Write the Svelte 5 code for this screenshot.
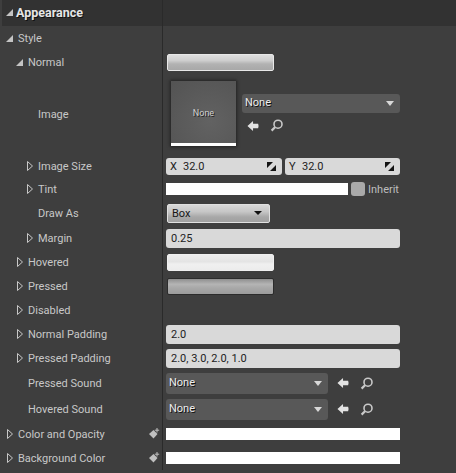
<script>
    const paddings = [
        { label: "Normal Padding", value: "2.0" },
        { label: "Pressed Padding", value: "2.0, 3.0, 2.0, 1.0" },
    ];
    const sounds = ["Pressed Sound", "Hovered Sound"];
    const colors = ["Color and Opacity", "Background Color"];
</script>

{#snippet open()}
    <svg class="tri" width="10" height="10" viewBox="0 0 10 10"><path d="M1 9 L8 2 V9 Z" fill="#c4c4c4" /></svg>
{/snippet}

{#snippet closed()}
    <svg class="tri" width="10" height="12" viewBox="0 0 10 12"><path d="M2.5 1.5 L7.5 6 L2.5 10.5 Z" fill="none" stroke="#c8c8c8" stroke-width="1" /></svg>
{/snippet}

{#snippet back()}
    <svg width="13" height="12" viewBox="0 0 14 12"><path d="M0.5 6 L6.5 0.5 V3.5 H12 Q13 6 12 8.5 H6.5 V11.5 Z" fill="#e2e2e2" /></svg>
{/snippet}

{#snippet search()}
    <svg width="14" height="13" viewBox="0 0 14 13"><circle cx="8" cy="5.2" r="4" fill="none" stroke="#c9c9c9" stroke-width="1.6" /><path d="M5 8.2 L1.6 11.6" stroke="#c9c9c9" stroke-width="2.2" /></svg>
{/snippet}

{#snippet expand()}
    <svg class="expand" width="9" height="9" viewBox="0 0 9 9"><path d="M0 0 H6 L0 6 Z M9 9 H3 L9 3 Z" fill="#141414" /></svg>
{/snippet}

{#snippet reset()}
    <svg class="keyicon" width="11" height="11" viewBox="0 0 11 11"><path d="M0 6 L4.5 2 L8.5 6 L4.5 10.5 Z" fill="#c0c0c0" /><path d="M8 0 V4.5 M5.8 2.2 H10.2" stroke="#c0c0c0" stroke-width="1" /></svg>
{/snippet}

<div class="panel">
    <div class="row header h26">
        <div class="name"><span class="i0">{@render open()}</span><b>Appearance</b></div>
        <div class="val"></div>
    </div>

    <div class="row h24">
        <div class="name"><span class="i0">{@render open()}</span>Style</div>
        <div class="val"></div>
    </div>

    <div class="row h24">
        <div class="name"><span class="i1">{@render open()}</span>Normal</div>
        <div class="val"><div class="swatch normal"></div></div>
    </div>

    <div class="row image-row">
        <div class="name"><span class="i3"></span>Image</div>
        <div class="val image-val">
            <div class="thumb"><span>None</span></div>
            <div class="asset">
                <div class="combo wide"><span>None</span><i class="caret"></i></div>
                <div class="tools">{@render back()}{@render search()}</div>
            </div>
        </div>
    </div>

    <div class="row h24">
        <div class="name"><span class="i2">{@render closed()}</span>Image Size</div>
        <div class="val xy">
            <div class="input small x"><span class="axis">X</span>32.0{@render expand()}</div>
            <div class="input small y"><span class="axis">Y</span>32.0{@render expand()}</div>
        </div>
    </div>

    <div class="row h22">
        <div class="name"><span class="i2">{@render closed()}</span>Tint</div>
        <div class="val tint">
            <div class="white short"></div>
            <div class="check"></div>
            <span class="inherit">Inherit</span>
        </div>
    </div>

    <div class="row h26">
        <div class="name"><span class="i3"></span>Draw As</div>
        <div class="val"><div class="enum">Box<i class="caret dark"></i></div></div>
    </div>

    <div class="row h24">
        <div class="name"><span class="i2">{@render closed()}</span>Margin</div>
        <div class="val"><div class="input">0.25</div></div>
    </div>

    <div class="row h24">
        <div class="name"><span class="i1">{@render closed()}</span>Hovered</div>
        <div class="val"><div class="swatch hovered"></div></div>
    </div>

    <div class="row h24">
        <div class="name"><span class="i1">{@render closed()}</span>Pressed</div>
        <div class="val"><div class="swatch pressed"></div></div>
    </div>

    <div class="row h24">
        <div class="name"><span class="i1">{@render closed()}</span>Disabled</div>
        <div class="val"></div>
    </div>

    {#each paddings as p}
        <div class="row h24">
            <div class="name"><span class="i1">{@render closed()}</span>{p.label}</div>
            <div class="val"><div class="input">{p.value}</div></div>
        </div>
    {/each}

    {#each sounds as s}
        <div class="row h26">
            <div class="name"><span class="i4"></span>{s}</div>
            <div class="val sound">
                <div class="combo"><span>None</span><i class="caret"></i></div>
                <div class="tools">{@render back()}{@render search()}</div>
            </div>
        </div>
    {/each}

    {#each colors as c}
        <div class="row h24">
            <div class="name color"><span class="i0">{@render closed()}</span>{c}{@render reset()}</div>
            <div class="val"><div class="white"></div></div>
        </div>
    {/each}
</div>

<style>
    :global(body) {
        margin: 0;
        background: #3e3e3e;
    }

    .panel {
        width: 456px;
        height: 473px;
        overflow: hidden;
        background: #3e3e3e;
        font-family: Roboto, "Liberation Sans", sans-serif;
        font-size: 11px;
        color: #c8c8c8;
    }

    .row {
        display: grid;
        grid-template-columns: 162px 1fr;
    }

    .h22 { height: 22px; }
    .h24 { height: 24px; }
    .h26 { height: 26px; }
    .image-row { height: 80px; }

    .header {
        background: #323232;
        margin-left: 2px;
        grid-template-columns: 160px 1fr;
    }

    .header .name {
        padding-bottom: 2px;
    }

    .header b {
        font-size: 12.5px;
        font-weight: 700;
        color: #e6e6e6;
        text-shadow: 1px 1px 0 #111;
    }

    .name {
        display: flex;
        align-items: center;
        white-space: nowrap;
        position: relative;
    }

    .header .name .i0 { width: 14px; padding-left: 3px; }

    .i0, .i1, .i2, .i3, .i4 {
        display: flex;
        align-items: center;
        flex: none;
    }

    .i0 { width: 18px; padding-left: 5px; box-sizing: border-box; }
    .i1 { width: 28px; padding-left: 15px; box-sizing: border-box; }
    .i2 { width: 38px; padding-left: 25px; box-sizing: border-box; }
    .i3 { width: 38px; }
    .i4 { width: 28px; }

    .keyicon {
        position: absolute;
        left: 149px;
        top: 6px;
    }

    .val {
        border-left: 1px solid #2a2a2a;
        padding-left: 3px;
        display: flex;
        align-items: center;
        min-width: 0;
    }

    .swatch {
        width: 107px;
        height: 17px;
        margin-left: 1px;
        box-sizing: border-box;
        border: 1px solid #222;
        border-radius: 2px;
    }

    .swatch.normal {
        background: linear-gradient(#dedede 0%, #d0d0d0 35%, #b2b2b2 60%, #a8a8a8 100%);
        border-color: #e8e8e8;
    }

    .swatch.hovered {
        background: linear-gradient(#ededed 0%, #e4e4e4 45%, #f0f0f0 60%, #ececec 100%);
        border-color: #f0f0f0;
    }

    .swatch.pressed {
        background: linear-gradient(#8f8f8f 0%, #b4b4b4 35%, #a8a8a8 60%, #9c9c9c 100%);
        border-color: #2c2c2c;
    }

    .image-val {
        align-items: flex-start;
        padding-left: 8px;
        gap: 6px;
    }

    .thumb {
        width: 65px;
        height: 65px;
        margin-top: 7px;
        padding-top: 2px;
        box-sizing: border-box;
        border-bottom: 3px solid #fff;
        background: radial-gradient(circle at 60% 65%, #626262, #535353);
        box-shadow: 0 0 3px 1px #222;
        display: flex;
        align-items: center;
        justify-content: center;
        font-size: 9px;
        color: #d0d0d0;
        text-shadow: 1px 1px 0 #222;
    }

    .asset {
        padding-top: 20px;
        display: flex;
        flex-direction: column;
    }

    .combo {
        width: 162px;
        height: 21px;
        background: #585858;
        border-radius: 3px;
        display: flex;
        align-items: center;
        justify-content: space-between;
        padding: 0 6px 2px 3px;
        box-sizing: border-box;
        color: #ececec;
        text-shadow: 1px 1px 0 #111;
    }

    .combo.wide {
        width: 158px;
        height: 19px;
    }

    .caret {
        width: 0;
        height: 0;
        margin-top: 2px;
        border-left: 4.5px solid transparent;
        border-right: 4.5px solid transparent;
        border-top: 5px solid #d8d8d8;
    }

    .caret.dark {
        margin-top: 0;
        border-top-color: #111;
        border-left-width: 4px;
        border-right-width: 4px;
        border-top-width: 4px;
    }

    .tools {
        display: flex;
        align-items: center;
        gap: 10px;
    }

    .asset .tools {
        padding: 6px 0 0 5px;
    }

    .sound {
        gap: 9px;
    }

    .xy {
        gap: 3px;
    }

    .input {
        width: 234px;
        height: 19px;
        background: #d9d9d9;
        border-radius: 3px;
        box-sizing: border-box;
        padding-left: 5px;
        display: flex;
        align-items: center;
        color: #222;
    }

    .input.small {
        height: 17px;
        position: relative;
        padding-left: 4px;
    }

    .input.x { width: 116px; }
    .input.y { width: 115px; }

    .axis {
        width: 13px;
    }

    .expand {
        position: absolute;
        right: 6px;
        top: 4px;
    }

    .white {
        width: 234px;
        height: 12px;
        background: #fff;
    }

    .white.short {
        width: 182px;
    }

    .check {
        width: 14px;
        height: 14px;
        margin-left: 3px;
        background: #a9a9a9;
        border-radius: 3px;
    }

    .inherit {
        margin-left: 3px;
        color: #bdbdbd;
    }

    .enum {
        width: 103px;
        height: 19px;
        margin-left: 1px;
        box-sizing: border-box;
        border: 1px solid #e0e0e0;
        border-radius: 2px;
        background: linear-gradient(#d8d8d8 0%, #c6c6c6 40%, #a8a8a8 70%, #a0a0a0 100%);
        color: #151515;
        display: flex;
        align-items: center;
        justify-content: space-between;
        padding: 0 7px 0 4px;
    }
</style>
